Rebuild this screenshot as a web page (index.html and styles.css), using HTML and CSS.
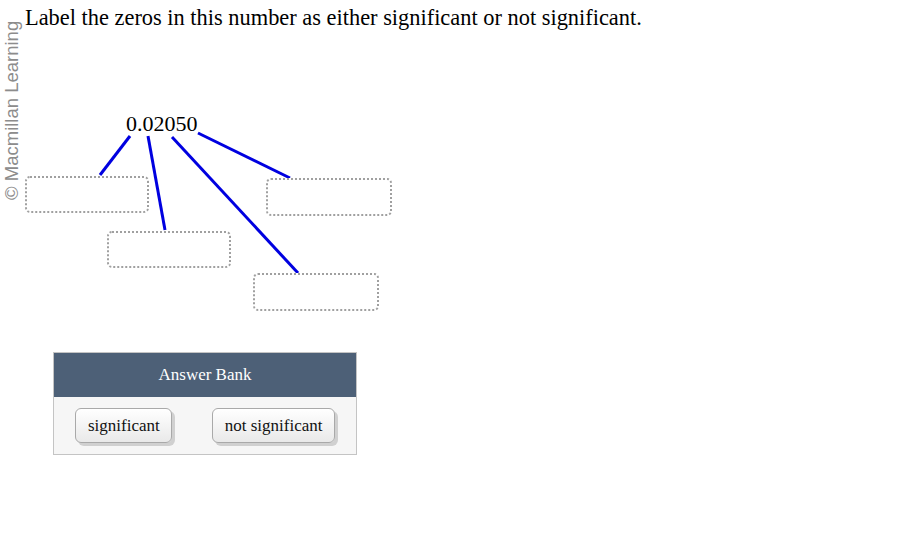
FILE: index.html
```html
<!DOCTYPE html>
<html lang="en">
<head>
  <meta charset="UTF-8">
  <title>Significant zeros</title>
  <link rel="stylesheet" href="styles.css">
</head>
<body>
  <div class="watermark">© Macmillan Learning</div>

  <div class="question">Label the zeros in this number as either significant or not significant.</div>

  <!-- labelling diagram -->
  <div class="diagram">
    <svg class="leaders" width="420" height="300" viewBox="0 40 420 300">
      <line x1="130" y1="136" x2="100" y2="175" />
      <line x1="148" y1="136" x2="165" y2="230" />
      <line x1="172" y1="137" x2="298" y2="273" />
      <line x1="198" y1="133" x2="290" y2="178" />
    </svg>
    <div class="number">0.02050</div>
    <div class="drop" style="left: 25px; top: 136px;"></div>
    <div class="drop wide" style="left: 266px; top: 138px;"></div>
    <div class="drop" style="left: 107px; top: 191px;"></div>
    <div class="drop wide" style="left: 253px; top: 233px;"></div>
  </div>

  <div class="answer-bank">
    <div class="bank-header">Answer Bank</div>
    <div class="bank-body">
      <button class="chip">significant</button>
      <button class="chip">not significant</button>
    </div>
  </div>
</body>
</html>
```

FILE: styles.css
```css
body {
  margin: 0;
  padding: 0;
  font-family: "Liberation Serif", "Times New Roman", serif;
  background-color: #ffffff;
  color: #000;
}

.watermark {
  position: absolute;
  left: 2px;
  top: 200px;
  transform-origin: 0 0;
  transform: rotate(-90deg);
  font-family: "Liberation Sans", Arial, sans-serif;
  font-size: 18.5px;
  line-height: 20px;
  color: #8c8c8c;
  white-space: nowrap;
}

.question {
  height: 40px;
  padding-left: 25px;
  font-size: 22.4px;
  line-height: 40px;
  margin-top: -2px;
}

.diagram {
  position: relative;
  height: 312px;
  margin-top: 2px;
}

.leaders {
  position: absolute;
  left: 0;
  top: 0;
}

.leaders line {
  stroke: #0000e0;
  stroke-width: 3;
}

.number {
  position: absolute;
  left: 126px;
  top: 71px;
  font-size: 22px;
  line-height: 26px;
}

.drop {
  position: absolute;
  width: 124px;
  height: 37px;
  border: 2px dotted #a0a0a0;
  border-radius: 5px;
  box-sizing: border-box;
  background-color: #fff;
}

.drop.wide {
  width: 126px;
  height: 38px;
}

.answer-bank {
  margin-left: 53px;
  width: 304px;
  border: 1px solid #c4c4c4;
  box-sizing: border-box;
}

.bank-header {
  height: 44px;
  line-height: 44px;
  background-color: #4d6077;
  color: #fff;
  text-align: center;
  font-size: 17px;
}

.bank-body {
  display: flex;
  gap: 40px;
  padding: 11px 0 11px 21px;
  background-color: #f6f6f6;
}

.chip {
  height: 35px;
  padding: 0 11px 0 12px;
  font-family: "Liberation Serif", "Times New Roman", serif;
  font-size: 17px;
  color: #111;
  background: linear-gradient(#ffffff, #e9e9e9);
  border: 1px solid #a9a9a9;
  border-radius: 6px;
  box-shadow: 3px 3px 0 #d0d0d0;
  cursor: pointer;
}
```
